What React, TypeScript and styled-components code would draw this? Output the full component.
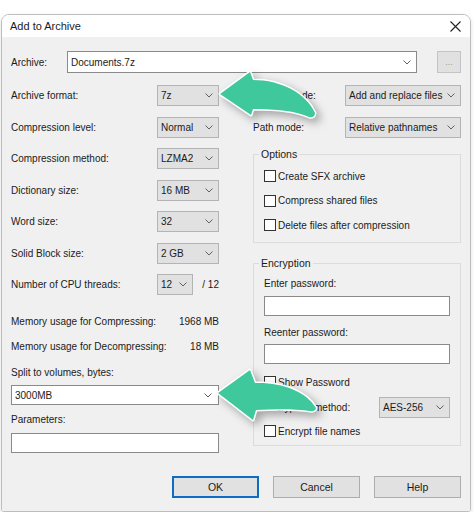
import styled, { createGlobalStyle } from 'styled-components';

const GlobalStyle = createGlobalStyle`
  body {
    margin: 0;
    background: #ffffff;
    font-family: "Liberation Sans", Arial, sans-serif;
    color: #1b1b1b;
  }
`;

const Dialog = styled.div`
  position: relative;
  margin: 14px 0 0 1px;
  width: 470px;
  box-sizing: border-box;
  border: 1px solid #bdbdbd;
  border-radius: 8px 8px 3px 3px;
  overflow: hidden;
  box-shadow: 0 2px 5px rgba(0, 0, 0, 0.12);
`;

const TitleBar = styled.div`
  height: 22px;
  display: flex;
  align-items: center;
  justify-content: space-between;
  padding: 0 9px 0 8px;
  background: #ffffff;
  font-size: 11px;
`;

const Body = styled.div`
  background: #f0f0f0;
  padding: 14px 9px 13px 9px;
  font-size: 10px;
`;

const ArchiveRow = styled.div`
  display: flex;
  align-items: center;
  height: 22px;
`;

const Label = styled.span<{ $w?: number }>`
  ${({ $w }) => ($w ? `width: ${$w}px; flex: none;` : 'flex: 1;')}
  white-space: nowrap;
`;

const Combo = styled.div<{ $w?: number; $h?: number; $white?: boolean }>`
  box-sizing: border-box;
  ${({ $w }) => ($w ? `width: ${$w}px; flex: none;` : 'width: 100%;')}
  height: ${({ $h }) => $h ?? 21}px;
  display: flex;
  align-items: center;
  justify-content: space-between;
  gap: 4px;
  padding: 0 5px 0 3px;
  background: ${({ $white }) => ($white ? '#ffffff' : '#e1e1e1')};
  border: 1px solid ${({ $white }) => ($white ? '#8a8a8a' : '#b4b4b4')};
  white-space: nowrap;
`;

const BrowseButton = styled.div`
  margin-left: auto;
  width: 24px;
  height: 22px;
  box-sizing: border-box;
  display: flex;
  align-items: center;
  justify-content: center;
  background: #e1e1e1;
  border: 1px solid #c4c4c4;
  color: #9a9a9a;
  font-size: 9px;
`;

const Columns = styled.div`
  display: grid;
  grid-template-columns: 208px 1fr;
  column-gap: 34px;
  margin-top: 7px;
`;

const Column = styled.div`
  display: flex;
  flex-direction: column;
`;

const FieldRow = styled.div<{ $h?: number; $mt?: number }>`
  height: ${({ $h }) => $h ?? 31.5}px;
  margin-top: ${({ $mt }) => $mt ?? 0}px;
  display: flex;
  align-items: center;
`;

const ThreadsTotal = styled.span`
  width: 26px;
  text-align: right;
`;

const MemoryRow = styled.div<{ $first?: boolean }>`
  height: 25px;
  display: flex;
  align-items: center;
  justify-content: space-between;
  margin-top: ${({ $first }) => ($first ? 8 : 0)}px;
`;

const Caption = styled.div<{ $mt: number }>`
  height: 14px;
  line-height: 14px;
  margin-top: ${({ $mt }) => $mt}px;
`;

const TextBox = styled.div<{ $mt: number }>`
  box-sizing: border-box;
  height: 20px;
  margin-top: ${({ $mt }) => $mt}px;
  background: #ffffff;
  border: 1px solid #8a8a8a;
  display: flex;
  align-items: center;
  justify-content: space-between;
  padding: 0 6px 0 3px;
`;

const Group = styled.fieldset<{ $mt: number }>`
  margin: ${({ $mt }) => $mt}px 0 0 0;
  padding: 3px 10px 4px 10px;
  border: 1px solid #dcdcdc;
  min-width: 0;
  display: flex;
  flex-direction: column;
`;

const Legend = styled.legend`
  padding: 0 2px;
  margin-left: -5px;
  font-size: 10.5px;
  line-height: 14px;
`;

const CheckRow = styled.label<{ $h?: number; $mt?: number }>`
  height: ${({ $h }) => $h ?? 24.5}px;
  margin-top: ${({ $mt }) => $mt ?? 0}px;
  display: flex;
  align-items: center;
`;

const Box = styled.span`
  width: 12px;
  height: 12px;
  box-sizing: border-box;
  border: 1px solid #333333;
  background: #ffffff;
  margin-right: 2px;
  flex: none;
`;

const Buttons = styled.div`
  display: flex;
  justify-content: flex-end;
  gap: 14px;
  margin-top: 23px;
`;

const Button = styled.div<{ $primary?: boolean }>`
  width: 87px;
  height: 22px;
  box-sizing: border-box;
  display: flex;
  align-items: center;
  justify-content: center;
  background: #e1e1e1;
  border: ${({ $primary }) => ($primary ? '2px solid #0a6fc2' : '1px solid #adadad')};
  font-size: 10.5px;
`;

const ArrowLayer = styled.svg<{ $x: number; $y: number }>`
  position: absolute;
  left: ${({ $x }) => $x}px;
  top: ${({ $y }) => $y}px;
  overflow: visible;
  filter: drop-shadow(4px 4px 4px rgba(0, 0, 0, 0.32));
  pointer-events: none;
`;

const Chevron = () => (
  <svg width="8" height="5" viewBox="0 0 8 5">
    <polyline points="0.5,0.5 4,4 7.5,0.5" fill="none" stroke="#606060" strokeWidth="1" />
  </svg>
);

const CloseIcon = () => (
  <svg width="11" height="11" viewBox="0 0 11 11">
    <path d="M0.5 0.5 L10.5 10.5 M10.5 0.5 L0.5 10.5" stroke="#222" strokeWidth="1.1" />
  </svg>
);

const Select = ({ value, w, white }: { value: string; w?: number; white?: boolean }) => (
  <Combo $w={w} $white={white}>
    <span>{value}</span>
    <Chevron />
  </Combo>
);

const Arrow = ({ x, y, d }: { x: number; y: number; d: string }) => (
  <ArrowLayer $x={x} $y={y} width="110" height="64" viewBox="0 0 110 64">
    <path d={d} fill="#3fc89b" stroke="#ffffff" strokeWidth="3" strokeLinejoin="round" paintOrder="stroke" />
  </ArrowLayer>
);

const leftRows = [
  { label: 'Archive format:', value: '7z' },
  { label: 'Compression level:', value: 'Normal' },
  { label: 'Compression method:', value: 'LZMA2' },
  { label: 'Dictionary size:', value: '16 MB' },
  { label: 'Word size:', value: '32' },
  { label: 'Solid Block size:', value: '2 GB' },
];

const App = () => (
  <>
    <GlobalStyle />
    <Dialog>
      <TitleBar>
        <span>Add to Archive</span>
        <CloseIcon />
      </TitleBar>
      <Body>
        <ArchiveRow>
          <Label $w={56}>Archive:</Label>
          <Combo $w={350} $h={22} $white>
            <span>Documents.7z</span>
            <Chevron />
          </Combo>
          <BrowseButton>...</BrowseButton>
        </ArchiveRow>

        <Columns>
          <Column>
            {leftRows.map((r) => (
              <FieldRow key={r.label}>
                <Label>{r.label}</Label>
                <Select value={r.value} w={62} />
              </FieldRow>
            ))}
            <FieldRow>
              <Label>Number of CPU threads:</Label>
              <Select value="12" w={36} />
              <ThreadsTotal>/ 12</ThreadsTotal>
            </FieldRow>
            <MemoryRow $first>
              <span>Memory usage for Compressing:</span>
              <span>1968 MB</span>
            </MemoryRow>
            <MemoryRow>
              <span>Memory usage for Decompressing:</span>
              <span>18 MB</span>
            </MemoryRow>
            <Caption $mt={7.5}>Split to volumes, bytes:</Caption>
            <TextBox $mt={5}>
              <span>3000MB</span>
              <Chevron />
            </TextBox>
            <Caption $mt={8}>Parameters:</Caption>
            <TextBox $mt={6} />
          </Column>

          <Column>
            <FieldRow>
              <Label>Update mode:</Label>
              <Select value="Add and replace files" w={116} />
            </FieldRow>
            <FieldRow>
              <Label>Path mode:</Label>
              <Select value="Relative pathnames" w={116} />
            </FieldRow>
            <Group $mt={4}>
              <Legend>Options</Legend>
              <CheckRow>
                <Box />
                Create SFX archive
              </CheckRow>
              <CheckRow>
                <Box />
                Compress shared files
              </CheckRow>
              <CheckRow>
                <Box />
                Delete files after compression
              </CheckRow>
            </Group>
            <Group $mt={13.5}>
              <Legend>Encryption</Legend>
              <Caption $mt={4}>Enter password:</Caption>
              <TextBox $mt={5} />
              <Caption $mt={10}>Reenter password:</Caption>
              <TextBox $mt={4} />
              <CheckRow $h={20} $mt={8}>
                <Box />
                Show Password
              </CheckRow>
              <FieldRow $h={20} $mt={5}>
                <Label>Encryption method:</Label>
                <Select value="AES-256" w={71} />
              </FieldRow>
              <CheckRow $h={20} $mt={4}>
                <Box />
                Encrypt file names
              </CheckRow>
            </Group>
          </Column>
        </Columns>

        <Buttons>
          <Button $primary>OK</Button>
          <Button>Cancel</Button>
          <Button>Help</Button>
        </Buttons>
      </Body>

      <Arrow x={209} y={50} d="M9,29 L39,7 L42,15 C70,15 95,28 104,48 Q104,53 98,52 C85,46 65,44 42,44 L40,50 Z" />
      <Arrow x={209} y={348} d="M7,30 L39,7 L44,20 C70,19 95,28 105,45 Q104,49 99,48 C85,46 65,46 45,47 L42,57 Z" />
    </Dialog>
  </>
);

export default App;
